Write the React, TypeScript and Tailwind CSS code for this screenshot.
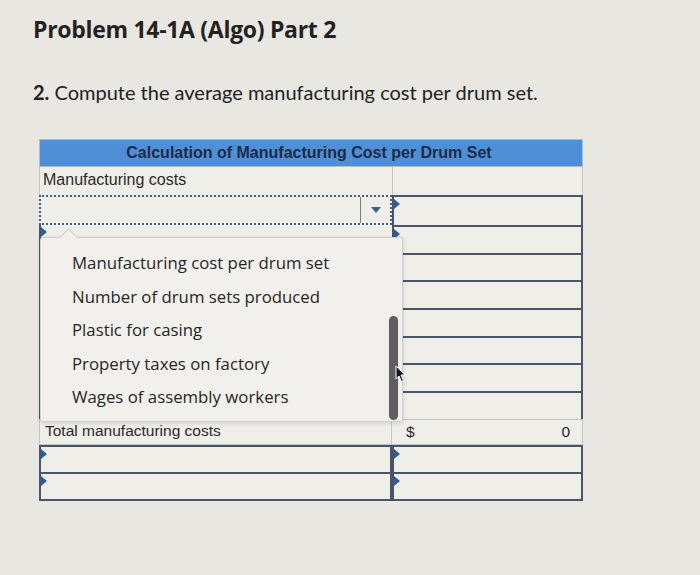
import React from 'react';

const Tab: React.FC = () => (
  <span className="absolute left-0 top-[2px] h-0 w-0 border-y-[5px] border-y-transparent border-l-[6px] border-l-[#2f5d9c]" />
);

const items = [
  'Manufacturing cost per drum set',
  'Number of drum sets produced',
  'Plastic for casing',
  'Property taxes on factory',
  'Wages of assembly workers',
];

const InputCell: React.FC<{ tab?: boolean; className?: string }> = ({ tab, className = '' }) => (
  <div className={`relative bg-[#efeee9] border-t-2 border-r-2 border-l-2 border-[#4a5568] ${className}`}>
    {tab && <Tab />}
  </div>
);

const App: React.FC = () => {
  return (
    <div className="w-[700px] h-[575px] overflow-hidden bg-[#e9e7e1] font-['Lato',sans-serif] text-[#222]">
      <div className="pl-[33px] pt-[15px]">
        <h1 className="font-['Open_Sans',sans-serif] text-[23px] font-bold leading-[28px] tracking-[-0.3px]">Problem 14-1A (Algo) Part 2</h1>
        <p className="mt-[36px] text-[20px] leading-[26px]">
          <span className="font-bold">2.</span> Compute the average manufacturing cost per drum set.
        </p>
      </div>

      <div className="relative ml-[39px] mt-[34px] w-[544px] font-['Liberation_Sans',Arial,sans-serif] text-[15.5px]">
        {/* header */}
        <div className="flex h-[28px] items-center justify-center border border-[#b5bcc6] bg-[#4f8fd6] pr-[4px] text-[16px] font-bold text-[#1c2b45]">
          Calculation of Manufacturing Cost per Drum Set
        </div>

        <div className="grid grid-cols-[353px_191px]">
          {/* Manufacturing costs */}
          <div className="h-[28px] border-l border-[#c4c4c4] bg-[#efeee9] pl-[3px] text-[16px] leading-[26px] text-[#2a2a2a]">Manufacturing costs</div>
          <div className="h-[28px] border-x border-[#c4c4c4] bg-[#efeee9]" />

          {/* dropdown row */}
          <div className="relative flex h-[30px] justify-end border-2 border-dotted border-[#3e5f91] bg-[#efeee9]">
            <div className="flex w-[30px] items-center justify-center border-l border-[#7c7c7c]">
              <span className="h-0 w-0 border-x-[5px] border-x-transparent border-t-[6px] border-t-[#3e5f91]" />
            </div>
          </div>
          <InputCell tab className="h-[30px]" />

          {/* rows behind the popup */}
          {Array.from({ length: 7 }).map((_, i) => (
            <React.Fragment key={i}>
              <div className="relative h-[27.7px] border-l-2 border-[#4a5568] bg-[#efeee9]">{i === 0 && <Tab />}</div>
              <InputCell tab={i === 0} className="h-[27.7px]" />
            </React.Fragment>
          ))}

          {/* total */}
          <div className="h-[26px] border-x border-y border-[#c4c4c4] bg-[#efeee9] pl-[5px] leading-[22px] text-[#2a2a2a]">
            Total manufacturing costs
          </div>
          <div className="flex h-[26px] items-center justify-between border-y border-r border-[#c4c4c4] bg-[#efeee9] pl-[14px] pr-[12px] text-[#2a2a2a]">
            <span>$</span>
            <span>0</span>
          </div>

          <InputCell tab className="h-[27px]" />
          <InputCell tab className="h-[27px] border-l-0" />
          <InputCell tab className="h-[29px] border-b-2" />
          <InputCell tab className="h-[29px] border-b-2 border-l-0" />
        </div>

        {/* dropdown menu */}
        <div className="absolute left-[1px] top-[98px] h-[185px] w-[363px] rounded-[3px] border border-[#cfcfcf] bg-[#f1f0ec] shadow-[0_1px_4px_rgba(0,0,0,0.15)] font-['Open_Sans',sans-serif] text-[16.8px] text-[#262626]">
          <span className="absolute left-[21px] top-[-7px] h-[13px] w-[13px] rotate-45 border-l border-t border-[#cfcfcf] bg-[#f1f0ec]" />
          <ul className="pt-[8px]">
            {items.map((t) => (
              <li key={t} className="h-[33.5px] pl-[31px] leading-[33px]">{t}</li>
            ))}
          </ul>
          <span className="absolute bottom-[1px] left-[348px] h-[104px] w-[9px] rounded-full bg-[#5e5e5e]" />
          <svg className="absolute left-[354px] top-[127px]" width="12" height="18" viewBox="0 0 12 18">
            <path d="M1 1 L1 14 L4 11 L6.5 16.5 L8.5 15.5 L6 10 L10 10 Z" fill="#1a1a1a" stroke="#fff" strokeWidth="1" />
          </svg>
        </div>
      </div>
    </div>
  );
};

export default App;
